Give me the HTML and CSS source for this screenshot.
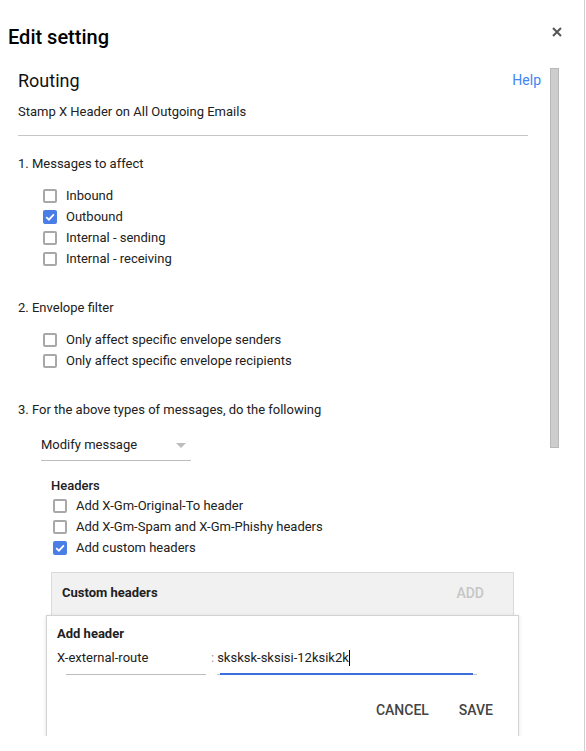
FILE: index.html
```html
<!DOCTYPE html>
<html lang="en">

<head>
    <meta charset="UTF-8">
    <meta name="viewport" content="width=device-width, initial-scale=1.0">
    <title>Edit setting</title>
    <link rel="stylesheet" href="styles.css">
</head>

<body>
    <div class="dialog">
        <div class="dialog-header">
            <h1>Edit setting</h1>
            <svg class="close" width="10" height="10" viewBox="0 0 10 10">
                <path d="M1 1 L9 9 M9 1 L1 9" stroke="#555" stroke-width="2" />
            </svg>
        </div>

        <div class="main">
            <div class="content">
                <div class="title-row">
                    <h2>Routing</h2>
                    <a class="help" href="#">Help</a>
                </div>
                <div class="subtitle">Stamp X Header on All Outgoing Emails</div>
                <div class="divider"></div>

                <div class="section-title first">1. Messages to affect</div>
                <div class="checklist">
                    <div class="check-row"><span class="box"></span>Inbound</div>
                    <div class="check-row"><span class="box checked"><svg width="14" height="14" viewBox="0 0 14 14"><path d="M3.2 7.2 L5.9 9.7 L10.9 4.3" fill="none" stroke="#fff" stroke-width="1.8" /></svg></span>Outbound</div>
                    <div class="check-row"><span class="box"></span>Internal - sending</div>
                    <div class="check-row"><span class="box"></span>Internal - receiving</div>
                </div>

                <div class="section-title">2. Envelope filter</div>
                <div class="checklist">
                    <div class="check-row"><span class="box"></span>Only affect specific envelope senders</div>
                    <div class="check-row"><span class="box"></span>Only affect specific envelope recipients</div>
                </div>

                <div class="section-title">3. For the above types of messages, do the following</div>
                <div class="dropdown">
                    <span>Modify message</span>
                    <span class="arrow"></span>
                </div>

                <div class="headers">
                    <div class="headers-label">Headers</div>
                    <div class="check-row small"><span class="box"></span>Add X-Gm-Original-To header</div>
                    <div class="check-row small"><span class="box"></span>Add X-Gm-Spam and X-Gm-Phishy headers</div>
                    <div class="check-row small"><span class="box checked"><svg width="14" height="14" viewBox="0 0 14 14"><path d="M3.2 7.2 L5.9 9.7 L10.9 4.3" fill="none" stroke="#fff" stroke-width="1.8" /></svg></span>Add custom headers</div>

                    <div class="custom-panel">
                        <div class="panel-head">
                            <span class="panel-title">Custom headers</span>
                            <span class="panel-add">ADD</span>
                        </div>

                        <!-- popover for a new header -->
                        <div class="popover">
                            <div class="popover-title">Add header</div>
                            <div class="field-row">
                                <div class="field name-field"><span>X-external-route</span></div>
                                <span class="colon">:</span>
                                <div class="field value-field">sksksk-sksisi-12ksik2k<span class="caret"></span></div>
                            </div>
                            <div class="actions">
                                <span class="action">CANCEL</span>
                                <span class="action">SAVE</span>
                            </div>
                        </div>
                    </div>
                </div>
            </div>

            <div class="scrollbar"></div>
        </div>
    </div>
</body>

</html>
```

FILE: styles.css
```css
body {
    margin: 0;
    font-family: Roboto, 'Noto Sans', sans-serif;
    font-size: 13px;
    color: #212121;
    background-color: #fff;
    overflow: hidden;
}

.dialog {
    width: 584px;
    height: 751px;
    border-right: 1px solid #d0d0d0;
    overflow: hidden;
}

.dialog-header {
    display: flex;
    justify-content: space-between;
    align-items: flex-start;
    padding: 25px 22px 0 8px;
}

.dialog-header h1 {
    margin: 0;
    font-size: 20px;
    font-weight: 500;
    line-height: 24px;
    color: #000;
}

.close {
    margin-top: 2px;
}

.main {
    display: flex;
    align-items: flex-start;
    margin-top: 19px;
    padding-left: 18px;
    height: 668px;
    overflow: hidden;
}

.content {
    width: 523px;
    flex-shrink: 0;
}

.title-row {
    display: flex;
    justify-content: space-between;
    align-items: center;
    height: 24px;
}

.title-row h2 {
    margin: 0;
    font-size: 18px;
    font-weight: 400;
    color: #111;
}

.help {
    font-size: 14px;
    color: #4285f4;
    text-decoration: none;
}

.subtitle {
    margin-top: 12px;
    line-height: 16px;
}

.divider {
    margin-top: 15px;
    width: 510px;
    border-top: 1px solid #c6c6c6;
}

.section-title {
    margin-top: 31px;
    line-height: 16px;
}

.section-title.first {
    margin-top: 20px;
}

.checklist {
    margin-top: 13px;
    padding-left: 25px;
}

.check-row {
    display: flex;
    align-items: center;
    gap: 9px;
    height: 21px;
}

.box {
    display: inline-block;
    width: 14px;
    height: 14px;
    box-sizing: border-box;
    border: 2px solid #a8a8a8;
    border-radius: 2px;
}

.box.checked {
    border: none;
    background-color: #4a7de6;
}

.box svg {
    display: block;
}

.dropdown {
    display: flex;
    justify-content: space-between;
    align-items: center;
    width: 150px;
    margin: 14px 0 0 23px;
    padding: 5px 0 7px;
    line-height: 16px;
    border-bottom: 1px solid #bdbdbd;
}

.arrow {
    margin-right: 5px;
    border-left: 5px solid transparent;
    border-right: 5px solid transparent;
    border-top: 5px solid #bdbdbd;
}

.headers {
    margin: 17px 0 0 33px;
}

.headers-label {
    line-height: 16px;
    font-weight: 500;
    margin-bottom: 1px;
}

.check-row.small {
    padding-left: 2px;
}

.custom-panel {
    position: relative;
    margin-top: 14px;
    width: 463px;
    height: 60px;
    box-sizing: border-box;
    background-color: #f1f1f1;
    border: 1px solid #dadada;
}

.panel-head {
    display: flex;
    justify-content: space-between;
    align-items: center;
    height: 39px;
    padding: 0 29px 0 10px;
}

.panel-title {
    font-weight: 700;
}

.panel-add {
    font-size: 14px;
    font-weight: 500;
    color: #c6c6c6;
}

.popover {
    position: absolute;
    top: 42px;
    left: -6px;
    width: 473px;
    height: 140px;
    box-sizing: border-box;
    padding: 10px 10px 0;
    background-color: #fff;
    border: 1px solid #d2d2d2;
    box-shadow: 0 1px 4px rgba(0, 0, 0, 0.12);
}

.popover-title {
    font-weight: 700;
    line-height: 16px;
}

.field-row {
    display: flex;
    align-items: flex-end;
}

.field {
    padding: 8px 0;
    line-height: 16px;
}

.name-field {
    width: 140px;
    margin-left: 9px;
    border-bottom: 1px solid #bdbdbd;
}

.name-field span {
    margin-left: -9px;
}

.colon {
    margin: 0 0 9px 5px;
    line-height: 16px;
    color: #9a9a9a;
}

.value-field {
    width: 260px;
    margin-left: 3px;
    padding-bottom: 9px;
    background:
        linear-gradient(#3c6fdc, #3c6fdc) no-repeat 3px 100% / calc(100% - 7px) 2px,
        linear-gradient(#c4c4c4, #c4c4c4) no-repeat 0 100% / 100% 1px;
}

.caret {
    display: inline-block;
    width: 1px;
    height: 16px;
    vertical-align: top;
    background-color: #000;
}

.actions {
    display: flex;
    justify-content: flex-end;
    gap: 30px;
    margin-top: 27px;
    padding-right: 15px;
}

.action {
    font-size: 14px;
    font-weight: 500;
    line-height: 16px;
    color: #444;
}

.scrollbar {
    flex-shrink: 0;
    margin-left: 9px;
    width: 9px;
    height: 380px;
    box-sizing: border-box;
    background-color: #cdcdcd;
    border: 1px solid #b8b8b8;
}
```
